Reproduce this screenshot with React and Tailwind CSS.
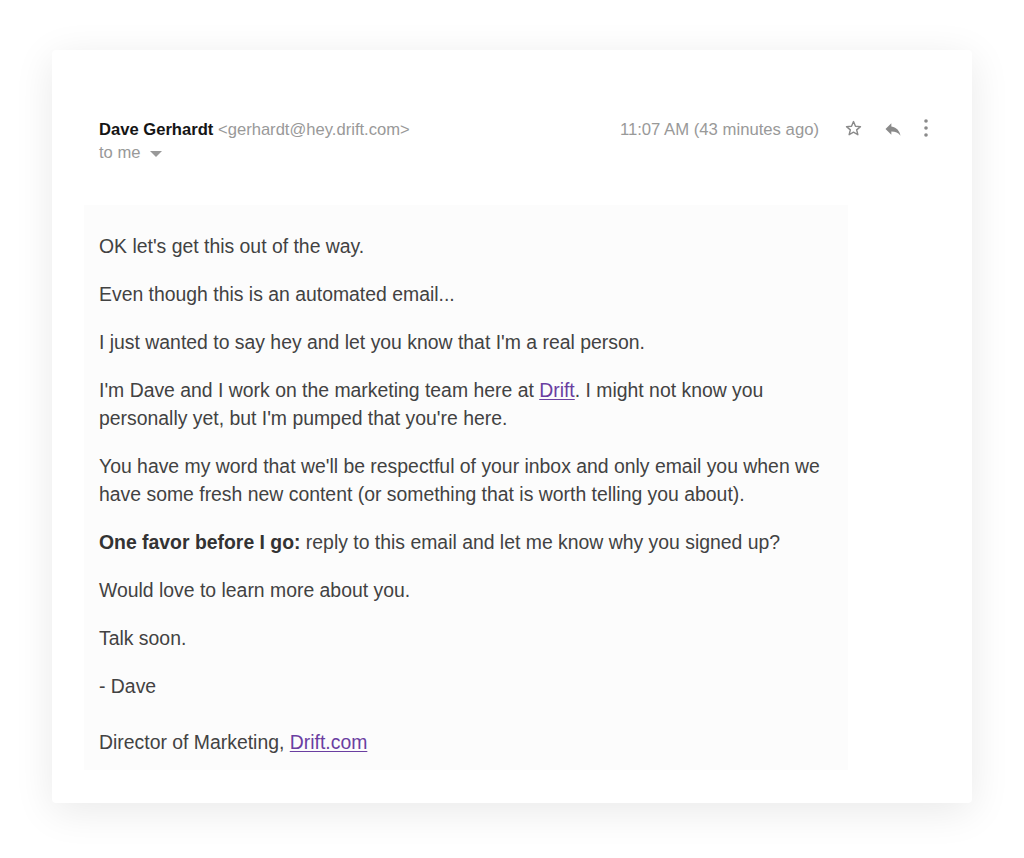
import React from "react";

export default function App() {
  const p = "text-[19.4px] leading-[28px] text-[#424242]";
  return (
    <div className="min-h-[858px] w-[1024px] bg-white pt-[50px] pl-[52px]" style={{ fontFamily: '"Liberation Sans", Arial, sans-serif' }}>
      <div className="w-[920px] h-[753px] rounded-[4px] bg-white shadow-[0_8px_40px_rgba(0,0,0,0.09)] pt-[118px] relative">
        {/* header */}
        <div className="flex items-start pl-[47px] pr-[43px] absolute top-[70px] left-0 right-0">
          <div className="flex flex-col">
            <div className="text-[16.6px] leading-[20px]">
              <span className="font-bold text-[#151515]">Dave Gerhardt</span>{" "}
              <span className="text-[#999999]">&lt;gerhardt@hey.drift.com&gt;</span>
            </div>
            <div className="flex items-center text-[16.6px] leading-[20px] text-[#999999] mt-[3px]">
              <span>to me</span>
              <svg width="12" height="8" viewBox="0 0 12 8" className="ml-[9px] mt-[2px]">
                <path d="M0 1 L12 1 L6 7 Z" fill="#999999" />
              </svg>
            </div>
          </div>
          <div className="flex-1" />
          <div className="flex items-center">
            <span className="text-[16.7px] leading-[20px] text-[#999999] mr-[25px]">11:07 AM (43 minutes ago)</span>
            <svg width="19" height="19" viewBox="0 0 24 24" className="mr-[20px] -mt-[4px]">
              <path d="M12 3.2 L14.5 9.1 L20.8 9.6 L16 13.7 L17.5 19.9 L12 16.6 L6.5 19.9 L8 13.7 L3.2 9.6 L9.5 9.1 Z" fill="none" stroke="#8a8a8a" strokeWidth="1.8" strokeLinejoin="round" />
            </svg>
            <svg width="20" height="20" viewBox="0 0 24 24" className="mr-[20px] -mt-[2px]">
              <path d="M10 9V5l-7 7 7 7v-4.1c5 0 8.5 1.6 11 5.1-1-5-4-10-11-11z" fill="#8a8a8a" />
            </svg>
            <svg width="6" height="20" viewBox="0 0 6 20" className="-mt-[4px]">
              <circle cx="3" cy="3" r="1.8" fill="#8a8a8a" />
              <circle cx="3" cy="10" r="1.8" fill="#8a8a8a" />
              <circle cx="3" cy="17" r="1.8" fill="#8a8a8a" />
            </svg>
          </div>
        </div>

        {/* body */}
        <div className="ml-[32px] mt-[37px] w-[764px] h-[565px] bg-[#fcfcfc] pl-[15px] pt-[27px]">
          <p className={p}>OK let's get this out of the way.</p>
          <p className={p + " mt-[20px]"}>Even though this is an automated email...</p>
          <p className={p + " mt-[20px]"}>I just wanted to say hey and let you know that I'm a real person.</p>
          <p className={p + " mt-[20px]"}>
            I'm Dave and I work on the marketing team here at{" "}
            <span className="text-[#6a3ea1] underline underline-offset-2">Drift</span>. I might not know you
            <br />
            personally yet, but I'm pumped that you're here.
          </p>
          <p className={p + " mt-[20px]"}>
            You have my word that we'll be respectful of your inbox and only email you when we
            <br />
            have some fresh new content (or something that is worth telling you about).
          </p>
          <p className={p + " mt-[20px]"}>
            <span className="font-bold text-[#333333]">One favor before I go:</span> reply to this email and let me know why you signed up?
          </p>
          <p className={p + " mt-[20px]"}>Would love to learn more about you.</p>
          <p className={p + " mt-[20px]"}>Talk soon.</p>
          <p className={p + " mt-[20px]"}>- Dave</p>
          <p className={p + " mt-[28px]"}>
            Director of Marketing,{" "}
            <span className="text-[#6a3ea1] underline underline-offset-2">Drift.com</span>
          </p>
        </div>
      </div>
    </div>
  );
}
